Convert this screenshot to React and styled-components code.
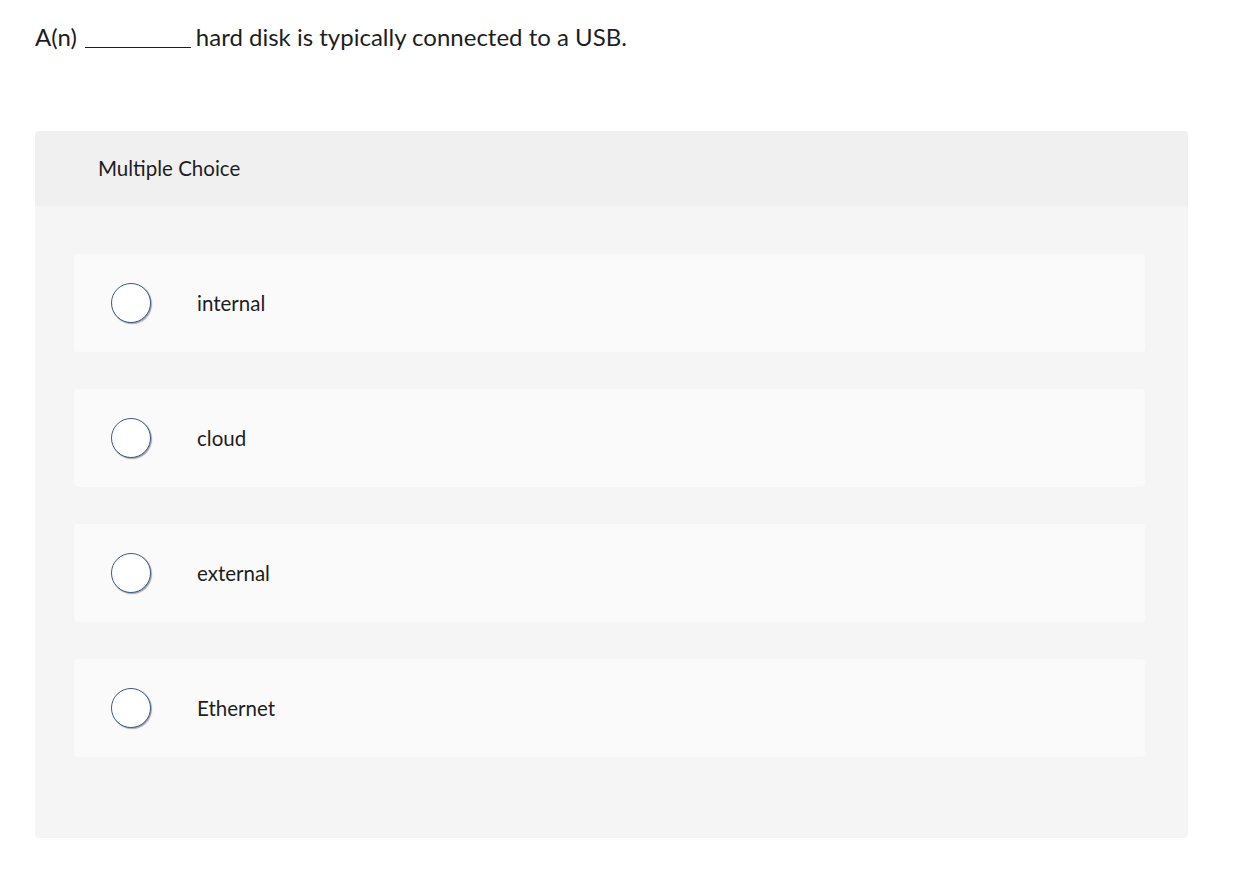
import React, { useState } from 'react';
import styled, { createGlobalStyle } from 'styled-components';

const GlobalStyle = createGlobalStyle`
  body {
    margin: 0;
    background: #ffffff;
    font-family: Lato, "Open Sans", "Liberation Sans", sans-serif;
    color: #222222;
  }
`;

const Page = styled.div`
  padding: 21px 60px 40px 35px;
`;

const Question = styled.p`
  margin: 0;
  font-size: 24px;
  line-height: 32px;
  color: #1e1e1e;
  display: flex;
  align-items: baseline;
`;

const Blank = styled.span`
  display: inline-block;
  width: 106px;
  margin: 0 5px 0 8px;
  border-bottom: 1.5px solid #1e1e1e;
  transform: translateY(2px);
`;

const Card = styled.div`
  margin-top: 78px;
  width: 1153px;
  background: #f5f5f5;
  border-radius: 4px;
  overflow: hidden;
`;

const CardHeader = styled.div`
  height: 75px;
  background: #f0f0f0;
  display: flex;
  align-items: center;
  padding-left: 63px;
  padding-bottom: 1px;
  box-sizing: border-box;
  font-size: 20.5px;
  color: #1e1e1e;
`;

const Options = styled.div`
  padding: 48px 43px 81px 39px;
  display: flex;
  flex-direction: column;
  gap: 37px;
`;

const Option = styled.label`
  height: 98px;
  background: #fafafa;
  border-radius: 4px;
  display: flex;
  align-items: center;
  padding-left: 37px;
  cursor: pointer;
`;

const Radio = styled.span`
  width: 38px;
  height: 38px;
  border-radius: 50%;
  border: 1.5px solid #3c5a85;
  background: #ffffff;
  box-shadow: 1px 1px 1px rgba(0, 0, 0, 0.35);
  flex-shrink: 0;
  display: flex;
  align-items: center;
  justify-content: center;

  &::after {
    content: '';
    width: 18px;
    height: 18px;
    border-radius: 50%;
    background: ${p => (p.$checked ? '#3c5a85' : 'transparent')};
  }
`;

const OptionText = styled.span`
  margin-left: 46px;
  font-size: 20.5px;
  color: #1e1e1e;
`;

const choices = ['internal', 'cloud', 'external', 'Ethernet'];

export default function App() {
  const [picked, setPicked] = useState(null);

  return (
    <Page>
      <GlobalStyle />
      <Question>
        A(n)
        <Blank />
        hard disk is typically connected to a USB.
      </Question>
      <Card>
        <CardHeader>Multiple Choice</CardHeader>
        <Options>
          {choices.map(c => (
            <Option key={c} onClick={() => setPicked(c)}>
              <Radio $checked={picked === c} />
              <OptionText>{c}</OptionText>
            </Option>
          ))}
        </Options>
      </Card>
    </Page>
  );
}
